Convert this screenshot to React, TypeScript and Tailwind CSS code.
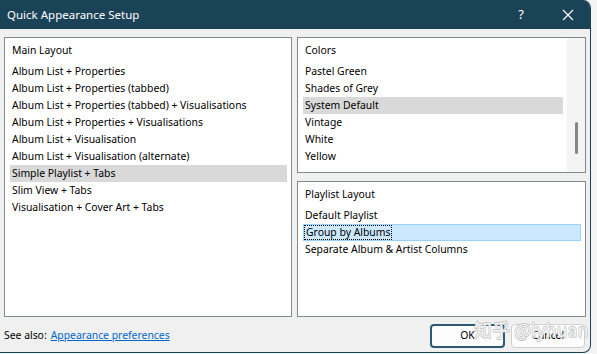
import React from 'react';

const mainLayouts = [
    'Album List + Properties',
    'Album List + Properties (tabbed)',
    'Album List + Properties (tabbed) + Visualisations',
    'Album List + Properties + Visualisations',
    'Album List + Visualisation',
    'Album List + Visualisation (alternate)',
    'Simple Playlist + Tabs',
    'Slim View + Tabs',
    'Visualisation + Cover Art + Tabs',
];

const colors = ['Pastel Green', 'Shades of Grey', 'System Default', 'Vintage', 'White', 'Yellow'];

const playlistLayouts = ['Default Playlist', 'Group by Albums', 'Separate Album & Artist Columns'];

function ListBox({
    title,
    items,
    selected,
    className,
    scroll,
}: {
    title: string;
    items: string[];
    selected: string;
    className: string;
    scroll?: boolean;
}) {
    return (
        <div className={`flex border border-[#828790] bg-white ${className}`}>
            <div className="flex-1 pl-[5px] pr-[4px]">
                <div className="mt-[4px] flex h-[17px] items-center pl-[2px]">{title}</div>
                <div className="mt-[4px]">
                    {items.map((item) => (
                        <div
                            key={item}
                            className={`flex h-[17px] items-center pl-[2px] ${
                                item === selected ? 'bg-[#d9d9d9]' : ''
                            }`}
                        >
                            {item}
                        </div>
                    ))}
                </div>
            </div>
            {scroll && (
                <div className="relative w-[18px] bg-[#f4f4f4]">
                    <div className="absolute left-[8px] top-[84px] h-[32px] w-[3px] rounded-full bg-[#858585]" />
                </div>
            )}
        </div>
    );
}

export default function App() {
    return (
        <div className="h-[354px] w-[597px] overflow-hidden bg-[#f3f3f3] font-['Noto_Sans',sans-serif] text-[10.4px] text-black">
            <div className="relative flex h-[353px] w-[591px] flex-col overflow-hidden rounded-r-[8px] border-b border-r border-[#1c4257] bg-[#f0f0f0]">
                {/* title bar */}
                <div className="flex h-[29px] items-center bg-[#1b4358] pl-[7px] text-white">
                    <span className="text-[11.5px]">Quick Appearance Setup</span>
                    <span className="ml-auto mr-[38px] text-[13px]">?</span>
                    <svg width="12" height="12" viewBox="0 0 12 12" className="mr-[16px]">
                        <path d="M1 1 L11 11 M11 1 L1 11" stroke="white" strokeWidth="1.2" />
                    </svg>
                </div>

                <div className="flex gap-[5px] pl-[4px] pt-[8px]">
                    <ListBox
                        title="Main Layout"
                        items={mainLayouts}
                        selected="Simple Playlist + Tabs"
                        className="h-[280px] w-[288px]"
                    />
                    <div className="flex flex-col gap-[8px]">
                        <ListBox
                            title="Colors"
                            items={colors}
                            selected="System Default"
                            className="h-[136px] w-[289px]"
                            scroll
                        />
                        <div className="h-[136px] w-[289px] border border-[#828790] bg-white pl-[5px] pr-[4px]">
                            <div className="mt-[4px] flex h-[17px] items-center pl-[2px]">Playlist Layout</div>
                            <div className="mt-[4px]">
                                {playlistLayouts.map((item) => (
                                    <div
                                        key={item}
                                        className={`flex h-[17px] items-center ${
                                            item === 'Group by Albums'
                                                ? 'border border-[#99d1ff] bg-[#cce8ff]'
                                                : 'pl-[2px]'
                                        }`}
                                    >
                                        {item === 'Group by Albums' ? (
                                            <span className="flex h-[15px] items-center border border-dotted border-black pl-[1px] pr-[1px]">
                                                {item}
                                            </span>
                                        ) : (
                                            item
                                        )}
                                    </div>
                                ))}
                            </div>
                        </div>
                    </div>
                </div>

                {/* footer */}
                <div className="mt-[7px] flex items-center pl-[4px]">
                    <span>See also:</span>
                    <a className="ml-[4px] text-[#0066cc] underline">Appearance preferences</a>
                    <div className="ml-auto mr-[5px] flex gap-[6px]">
                        <button className="h-[24px] w-[75px] rounded-[4px] border-2 border-[#2c5a72] bg-[#fdfdfd]">
                            OK
                        </button>
                        <button className="h-[24px] w-[74px] rounded-[4px] border border-[#d0d0d0] bg-[#fdfdfd]">
                            Cancel
                        </button>
                    </div>
                </div>

                {/* watermark */}
                <div className="pointer-events-none absolute left-[474px] top-[317px] whitespace-nowrap font-['Noto_Sans_CJK_SC',sans-serif] text-[18px] leading-[24px] text-white/80 [text-shadow:0.6px_0_#c4c4c4,-0.6px_0_#c4c4c4,0_0.6px_#c4c4c4,0_-0.6px_#c4c4c4]">
                    知乎 @lyhuan
                </div>
            </div>
        </div>
    );
}
